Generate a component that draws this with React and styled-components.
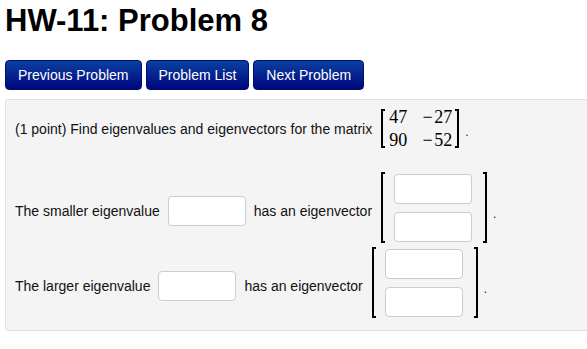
import React from "react";
import styled, { createGlobalStyle } from "styled-components";

const GlobalStyle = createGlobalStyle`
  body {
    margin: 0;
    background: #fff;
    font-family: "Liberation Sans", Arial, sans-serif;
    color: #111;
    overflow: hidden;
  }
`;

const App = () => {
  return (
    <Page>
      <GlobalStyle />
      <Title>HW-11: Problem 8</Title>
      <Nav>
        <NavButton>Previous Problem</NavButton>
        <NavButton>Problem List</NavButton>
        <NavButton>Next Problem</NavButton>
      </Nav>
      <Panel>
        <Row>
          <span>(1 point) Find eigenvalues and eigenvectors for the matrix</span>
          <Matrix>
            <Bracket />
            <Grid>
              <Cell>47</Cell>
              <Cell>−&#8202;27</Cell>
              <Cell>90</Cell>
              <Cell>−&#8202;52</Cell>
            </Grid>
            <Bracket right />
          </Matrix>
          <Dot offset={6}>.</Dot>
        </Row>
        <AnswerRow top={24}>
          <span>The smaller eigenvalue</span>
          <Input />
          <span>has an eigenvector</span>
          <Vector>
            <Bracket tall />
            <VectorInputs>
              <Input />
              <Input />
            </VectorInputs>
            <Bracket tall right />
          </Vector>
          <Dot offset={-2}>.</Dot>
        </AnswerRow>
        <AnswerRow top={-3}>
          <span>The larger eigenvalue</span>
          <Input />
          <span>has an eigenvector</span>
          <Vector>
            <Bracket tall />
            <VectorInputs>
              <Input />
              <Input />
            </VectorInputs>
            <Bracket tall right />
          </Vector>
          <Dot offset={-2}>.</Dot>
        </AnswerRow>
      </Panel>
    </Page>
  );
};

export default App;

const Page = styled.div`
  padding: 0 0 0 5px;
  width: 640px;
`;

const Title = styled.h1`
  margin: 4px 0 0;
  font-size: 31px;
  line-height: 34px;
  font-weight: bold;
  color: #000;
`;

const Nav = styled.div`
  display: flex;
  gap: 4px;
  margin-top: 22px;
`;

const NavButton = styled.div`
  height: 30px;
  box-sizing: border-box;
  padding: 0 12px;
  display: flex;
  align-items: center;
  font-size: 14px;
  color: #fff;
  border-radius: 4px;
  border: 1px solid #000c70;
  background: linear-gradient(to bottom, #0b40a2, #00067d);
`;

const Panel = styled.div`
  margin-top: 9px;
  box-sizing: border-box;
  width: 620px;
  padding: 9px 9px 5px;
  background: #f4f4f4;
  border: 1px solid #e2e2e2;
  border-radius: 3px;
  font-size: 14px;
`;

const Row = styled.div`
  display: flex;
  align-items: center;
`;

const AnswerRow = styled(Row)`
  margin-top: ${(p) => p.top}px;
  gap: 8px;
`;

const Matrix = styled.div`
  display: flex;
  align-items: center;
  height: 39px;
  margin-left: 9px;
`;

const Bracket = styled.div`
  flex: none;
  width: 4px;
  height: ${(p) => (p.tall ? "71px" : "39px")};
  box-sizing: border-box;
  border: 2px solid #000;
  ${(p) => (p.right ? "border-left: none;" : "border-right: none;")}
`;

const Grid = styled.div`
  display: grid;
  grid-template-columns: 19px 30px;
  column-gap: 15px;
  row-gap: 4px;
  padding: 0 3px 0 3px;
  font-family: "Liberation Serif", "Times New Roman", serif;
  font-size: 18px;
  line-height: 19px;
  color: #000;
`;

const Cell = styled.span`
  text-align: right;
  white-space: nowrap;
`;

const Dot = styled.span`
  margin-left: ${(p) => p.offset}px;
  margin-top: 6px;
  font-size: 12px;
`;

const Input = styled.div`
  flex: none;
  width: 78px;
  height: 30px;
  box-sizing: border-box;
  background: #fff;
  border: 1px solid #ccc;
  border-radius: 4px;
`;

const Vector = styled.div`
  display: flex;
  align-items: center;
  gap: 9px;
  margin: 0 0 7px 1px;
`;

const VectorInputs = styled.div`
  display: flex;
  flex-direction: column;
  gap: 8px;
  margin-right: 2px;
`;
